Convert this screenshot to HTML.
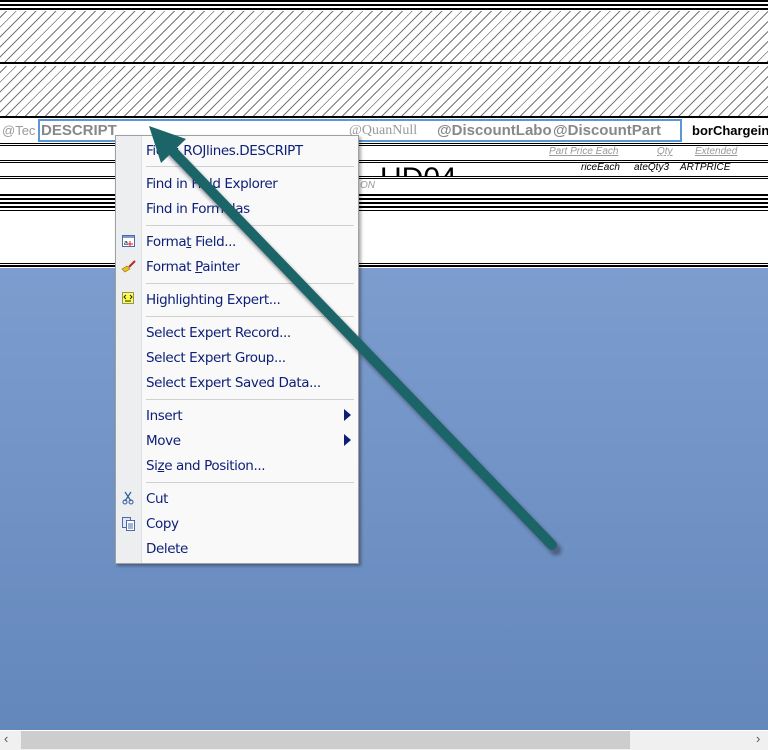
<!DOCTYPE html>
<html><head><meta charset="utf-8"><style>
*{margin:0;padding:0;box-sizing:border-box}
body{width:768px;height:750px;overflow:hidden;position:relative;background:#fff;font-family:"Liberation Sans",sans-serif}
.abs{position:absolute}
.hatch{background:repeating-linear-gradient(135deg,#fff 0 4px,#777 4px 5px,#fff 5px 7px);}
.ln{position:absolute;left:0;width:768px;background:#000}
.menu{position:absolute;left:115px;top:135px;width:244px;height:429px;background:#f9f9f9;border:1px solid #a0a0a0;box-shadow:2px 2px 3px rgba(0,0,0,.35)}
.menu .side{position:absolute;left:0;top:0;width:26px;height:100%;background:#eceef0;border-right:1px solid #dcdfe3}
.mi{position:absolute;left:30px;font-family:"DejaVu Sans","Liberation Sans",sans-serif;font-size:13.5px;color:#0c1e78;letter-spacing:-0.4px}
.sep{position:absolute;left:30px;right:4px;height:1px;background:#d0d0d0}
.tri{position:absolute;right:7px;width:0;height:0;border-top:6px solid transparent;border-bottom:6px solid transparent;border-left:7px solid #0c1e78}
</style></head><body>
<div class="ln" style="top:0;height:2px"></div>
<div class="ln" style="top:4px;height:2px"></div>
<div class="ln" style="top:8px;height:2px"></div>
<div class="abs hatch" style="left:0;top:11px;width:768px;height:51px"></div>
<div class="ln" style="top:62px;height:2px"></div>
<div class="abs hatch" style="left:0;top:66px;width:768px;height:50px"></div>
<div class="ln" style="top:116px;height:2px"></div>
<div class="abs" style="left:2px;top:123px;font-size:13px;color:#999">@Tec</div>
<div class="abs" style="left:38px;top:119px;width:644px;height:23px;border:2px solid #5a96d8"></div>
<div class="abs" style="left:41px;top:122px;font-size:15px;font-weight:bold;color:#888">DESCRIPT</div>
<div class="abs" style="left:349px;top:123px;font-size:14px;color:#999;font-family:'Liberation Serif',serif">@QuanNull</div>
<div class="abs" style="left:437px;top:122px;font-size:15px;font-weight:bold;color:#888">@DiscountLabo</div>
<div class="abs" style="left:553px;top:122px;font-size:15px;font-weight:bold;color:#888">@DiscountPart</div>
<div class="abs" style="left:692px;top:123px;font-size:13px;font-weight:bold;color:#000">borChargein</div>
<div class="ln" style="top:143px;height:1px"></div>
<div class="ln" style="top:145px;height:1px"></div>
<div class="abs" style="left:549px;top:146px;font-size:10px;font-style:italic;color:#999;text-decoration:underline">Part Price Each</div>
<div class="abs" style="left:657px;top:146px;font-size:10px;font-style:italic;color:#999;text-decoration:underline">Qty</div>
<div class="abs" style="left:695px;top:146px;font-size:10px;font-style:italic;color:#999;text-decoration:underline">Extended</div>
<div class="ln" style="top:160px;height:1px"></div>
<div class="ln" style="top:162px;height:1px"></div>
<div class="abs" style="left:380px;top:160px;width:80px;height:16px;overflow:hidden;font-size:30px;line-height:38px">UD04</div>
<div class="abs" style="left:581px;top:162px;font-size:10px;font-style:italic">riceEach</div>
<div class="abs" style="left:634px;top:162px;font-size:10px;font-style:italic">ateQty3</div>
<div class="abs" style="left:680px;top:162px;font-size:10px;font-style:italic">ARTPRICE</div>
<div class="ln" style="top:176px;height:1px"></div>
<div class="ln" style="top:178px;height:1px"></div>
<div class="abs" style="left:360px;top:180px;font-size:10px;font-style:italic;color:#999">ON</div>
<div class="ln" style="top:194px;height:2px"></div>
<div class="ln" style="top:198px;height:2px"></div>
<div class="ln" style="top:202px;height:2px"></div>
<div class="ln" style="top:206px;height:2px"></div>
<div class="ln" style="top:210px;height:1px"></div>
<div class="ln" style="top:263px;height:1px"></div>
<div class="ln" style="top:265px;height:2px"></div>
<div class="abs" style="left:0;top:268px;width:768px;height:462px;background:linear-gradient(#7c9dce,#6487bb)"></div>
<div class="abs" style="left:0;top:730px;width:768px;height:20px;background:#f0f0f0;border-top:1px solid #fff"></div>
<div class="abs" style="left:21px;top:731px;width:609px;height:18px;background:#cdcdcd"></div>
<div class="abs" style="left:4px;top:731px;font-size:13px;color:#555">‹</div>
<div class="abs" style="left:756px;top:731px;font-size:13px;color:#555">›</div>
<div class="menu"><div class="side"></div>
<div class="mi" style="top:7px">Field: ROJlines.DESCRIPT</div>
<div class="sep" style="top:30px"></div>
<div class="mi" style="top:40px">Find in Field Explorer</div>
<div class="mi" style="top:65px">Find in Formulas</div>
<div class="sep" style="top:89px"></div>
<div class="mi" style="top:98px">Forma<u>t</u> Field...</div>
<div class="mi" style="top:123px">Format <u>P</u>ainter</div>
<div class="sep" style="top:147px"></div>
<div class="mi" style="top:156px">Highlighting Expert...</div>
<div class="sep" style="top:180px"></div>
<div class="mi" style="top:189px">Select Expert Record...</div>
<div class="mi" style="top:214px">Select Expert Group...</div>
<div class="mi" style="top:239px">Select Expert Saved Data...</div>
<div class="sep" style="top:263px"></div>
<div class="mi" style="top:272px">Insert</div><div class="tri" style="top:273px"></div>
<div class="mi" style="top:297px">Move</div><div class="tri" style="top:298px"></div>
<div class="mi" style="top:322px">Si<u>z</u>e and Position...</div>
<div class="sep" style="top:346px"></div>
<div class="mi" style="top:355px">Cut</div>
<div class="mi" style="top:380px">Copy</div>
<div class="mi" style="top:405px">Delete</div>
<svg class="abs" style="left:6px;top:99px" width="13" height="12"><rect x=".5" y=".5" width="12" height="11" fill="#fff" stroke="#4a6aa8"/><rect x="1" y="1" width="11" height="2" fill="#7d9bd0"/><text x="2" y="10" font-size="7" font-family="Liberation Sans">a</text><path d="M8 6v5M6 9h5" stroke="#d22" /></svg>
<svg class="abs" style="left:5px;top:124px" width="15" height="13"><path d="M1 9l5-3 3 3-5 3z" fill="#e8c21a" stroke="#9a7a00" stroke-width=".6"/><path d="M8 7l6-6" stroke="#b03020" stroke-width="2"/></svg>
<svg class="abs" style="left:6px;top:156px" width="12" height="12"><rect x=".5" y=".5" width="11" height="11" fill="#ffff40" stroke="#333" stroke-dasharray="1 1"/><path d="M4 3l-2 2 2 2M8 3l2 2-2 2M3 9h6" stroke="#222" fill="none"/></svg>
<svg class="abs" style="left:6px;top:355px" width="12" height="14"><path d="M3 1l6 9M9 1l-6 9" stroke="#2a5aa0" stroke-width="1.2"/><circle cx="3" cy="11" r="2" fill="none" stroke="#2a5aa0"/><circle cx="9" cy="11" r="2" fill="none" stroke="#2a5aa0"/></svg>
<svg class="abs" style="left:6px;top:381px" width="13" height="14"><rect x=".5" y=".5" width="8" height="10" fill="#dfe8f5" stroke="#4a6aa8"/><rect x="4.5" y="3.5" width="8" height="10" fill="#fff" stroke="#4a6aa8"/><path d="M6 7h5M6 9h5M6 11h5" stroke="#4a6aa8"/></svg>
</div>
<svg class="abs" style="left:0;top:0" width="768" height="750">
<defs><filter id="s"><feGaussianBlur stdDeviation="1.5"/></filter></defs>
<line x1="165" y1="145" x2="556" y2="550" stroke="#334" stroke-opacity=".5" stroke-width="11" stroke-linecap="round" filter="url(#s)"/>
<line x1="162" y1="140" x2="552" y2="545" stroke="#1b6467" stroke-width="10" stroke-linecap="round"/>
<polygon points="149,126 186,139 161,163" fill="#1b6467"/>
</svg>
</body></html>
